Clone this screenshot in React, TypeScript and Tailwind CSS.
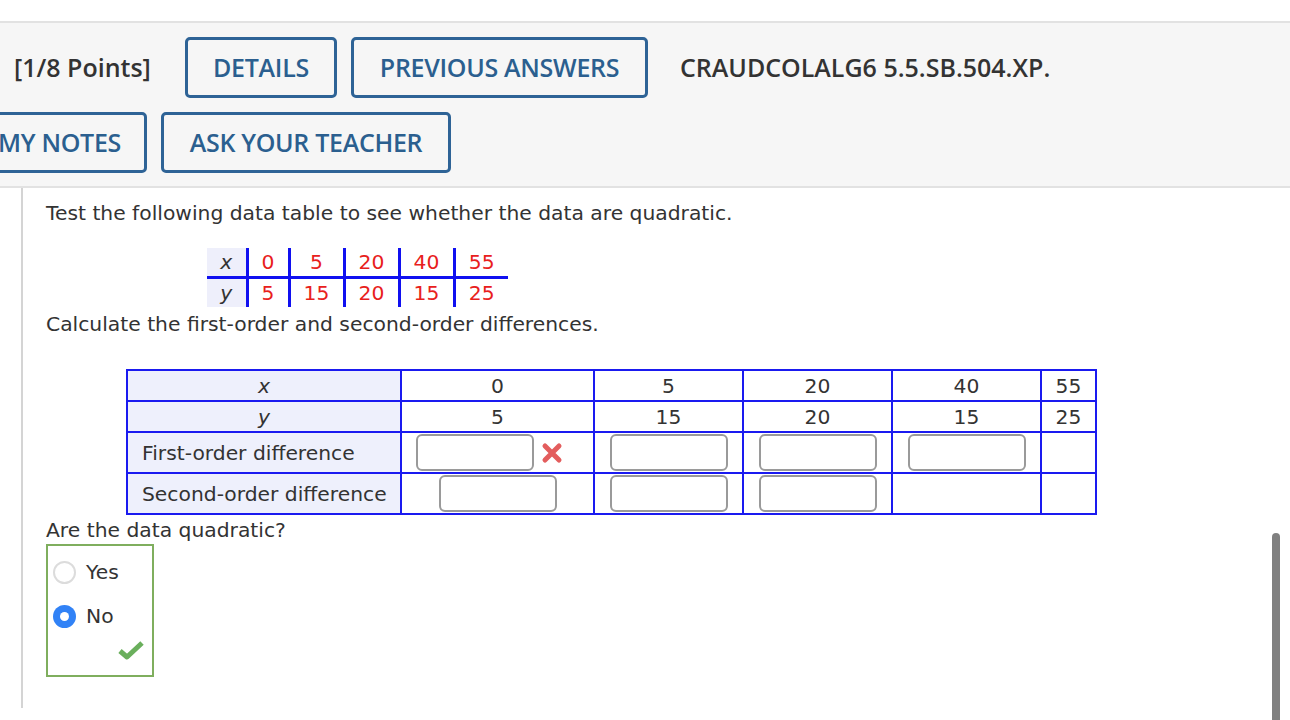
import React from "react";

const headerBtn =
  "h-[61px] rounded-[5px] border-[3px] border-[#2e6396] bg-transparent text-center text-[25px] font-semibold tracking-[-0.3px] text-[#2b5f8f]";

const xs = ["0", "5", "20", "40", "55"];
const ys = ["5", "15", "20", "15", "25"];
const smallW = ["w-[42px]", "w-[55px]", "w-[55px]", "w-[55px]", "w-[54px]"];

function XMark() {
  return (
    <svg width="22" height="22" viewBox="0 0 22 22" className="inline-block">
      <path d="M4 4 L18 18 M18 4 L4 18" stroke="#e35d5d" strokeWidth="5" strokeLinecap="round" />
    </svg>
  );
}

function Check() {
  return (
    <svg width="26" height="20" viewBox="0 0 26 20">
      <path d="M2 11 L9 17 L24 3" fill="none" stroke="#6aaf5c" strokeWidth="5" strokeLinejoin="round" />
    </svg>
  );
}

function Box({ className = "" }: { className?: string }) {
  return <div className={"h-[37px] w-[118px] rounded-[6px] border-2 border-[#9a9a9a] bg-white " + className} />;
}

export default function App() {
  return (
    <div className="relative h-[720px] w-[1290px] overflow-hidden bg-white font-['DejaVu_Sans',Verdana,sans-serif] text-[#333]">
      <div className="h-[21px]" />
      <div className="h-[167px] border-y-2 border-[#e2e2e2] bg-[#f6f6f6] font-['Open_Sans',sans-serif]">
        <div className="flex items-center pt-[14px]">
          <span className="ml-[14px] w-[171px] text-[25px] font-semibold text-[#333]">[1/8 Points]</span>
          <button className={headerBtn + " w-[152px]"}>DETAILS</button>
          <button className={headerBtn + " ml-[14px] w-[297px]"}>PREVIOUS ANSWERS</button>
          <span className="ml-[32px] text-[25px] font-semibold text-[#333]">CRAUDCOLALG6 5.5.SB.504.XP.</span>
        </div>
        <div className="mt-[14px] flex items-center">
          <button className={headerBtn + " -ml-[28px] w-[175px]"}>MY NOTES</button>
          <button className={headerBtn + " ml-[14px] w-[290px]"}>ASK YOUR TEACHER</button>
        </div>
      </div>

      <div className="ml-[21px] h-[520px] border-l-2 border-[#d4d4d4] pl-[23px] pt-[12px] text-[20.3px] leading-[26px]">
        <p>Test the following data table to see whether the data are quadratic.</p>

        <table className="ml-[161px] mt-[22px] table-fixed border-collapse leading-[28px]">
          <tbody>
            <tr>
              <td className="w-[40px] border-b-[3px] border-r-[3px] border-[#1010f0] bg-[#eeeffb] text-center italic">x</td>
              {xs.map((v, i) => (
                <td
                  key={i}
                  className={
                    smallW[i] +
                    " border-b-[3px] border-[#1010f0] text-center text-[#e8201c] " +
                    (i < 4 ? "border-r-[3px]" : "")
                  }
                >
                  {v}
                </td>
              ))}
            </tr>
            <tr>
              <td className="border-r-[3px] border-[#1010f0] bg-[#eeeffb] text-center italic">y</td>
              {ys.map((v, i) => (
                <td key={i} className={"border-[#1010f0] text-center text-[#e8201c] " + (i < 4 ? "border-r-[3px]" : "")}>
                  {v}
                </td>
              ))}
            </tr>
          </tbody>
        </table>

        <p className="mt-[4px]">Calculate the first-order and second-order differences.</p>

        <table className="ml-[80px] mt-[32px] table-fixed border-collapse border-2 border-[#1a1af0]">
          <colgroup>
            <col className="w-[274px]" />
            <col className="w-[193px]" />
            <col className="w-[149px]" />
            <col className="w-[149px]" />
            <col className="w-[149px]" />
            <col className="w-[55px]" />
          </colgroup>
          <tbody>
            <tr className="h-[31px]">
              <td className="border-2 border-[#1a1af0] bg-[#eef0fc] text-center italic">x</td>
              {xs.map((v, i) => (
                <td key={i} className="border-2 border-[#1a1af0] text-center">{v}</td>
              ))}
            </tr>
            <tr className="h-[31px]">
              <td className="border-2 border-[#1a1af0] bg-[#eef0fc] text-center italic">y</td>
              {ys.map((v, i) => (
                <td key={i} className="border-2 border-[#1a1af0] text-center">{v}</td>
              ))}
            </tr>
            <tr className="h-[41px]">
              <td className="border-2 border-[#1a1af0] bg-[#eef0fc] pl-[14px]">First-order difference</td>
              <td className="border-2 border-[#1a1af0] pl-[14px]">
                <div className="flex items-center gap-[7px]">
                  <Box />
                  <XMark />
                </div>
              </td>
              <td className="border-2 border-[#1a1af0]"><Box className="mx-auto" /></td>
              <td className="border-2 border-[#1a1af0]"><Box className="mx-auto" /></td>
              <td className="border-2 border-[#1a1af0]"><Box className="mx-auto" /></td>
              <td className="border-2 border-[#1a1af0]" />
            </tr>
            <tr className="h-[41px]">
              <td className="border-2 border-[#1a1af0] bg-[#eef0fc] pl-[14px]">Second-order difference</td>
              <td className="border-2 border-[#1a1af0]"><Box className="mx-auto" /></td>
              <td className="border-2 border-[#1a1af0]"><Box className="mx-auto" /></td>
              <td className="border-2 border-[#1a1af0]"><Box className="mx-auto" /></td>
              <td className="border-2 border-[#1a1af0]" />
              <td className="border-2 border-[#1a1af0]" />
            </tr>
          </tbody>
        </table>

        <p className="mt-[2px]">Are the data quadratic?</p>

        <div className="mt-[1px] h-[133px] w-[108px] border-2 border-[#7fae5e] pl-[5px] pt-[13px]">
          <div className="flex items-center gap-[10px]">
            <span className="h-[23px] w-[23px] rounded-full border-2 border-[#dcdcdc] bg-white" />
            <span>Yes</span>
          </div>
          <div className="mt-[18px] flex items-center gap-[10px]">
            <span className="flex h-[23px] w-[23px] items-center justify-center rounded-full bg-[#3182f6]">
              <span className="h-[9px] w-[9px] rounded-full bg-white" />
            </span>
            <span>No</span>
          </div>
          <div className="mt-[11px] flex justify-end pr-[8px]">
            <Check />
          </div>
        </div>
      </div>

      <div className="absolute left-[1272px] top-[533px] h-[200px] w-[8px] rounded-t-full bg-[#808080]" />
    </div>
  );
}
